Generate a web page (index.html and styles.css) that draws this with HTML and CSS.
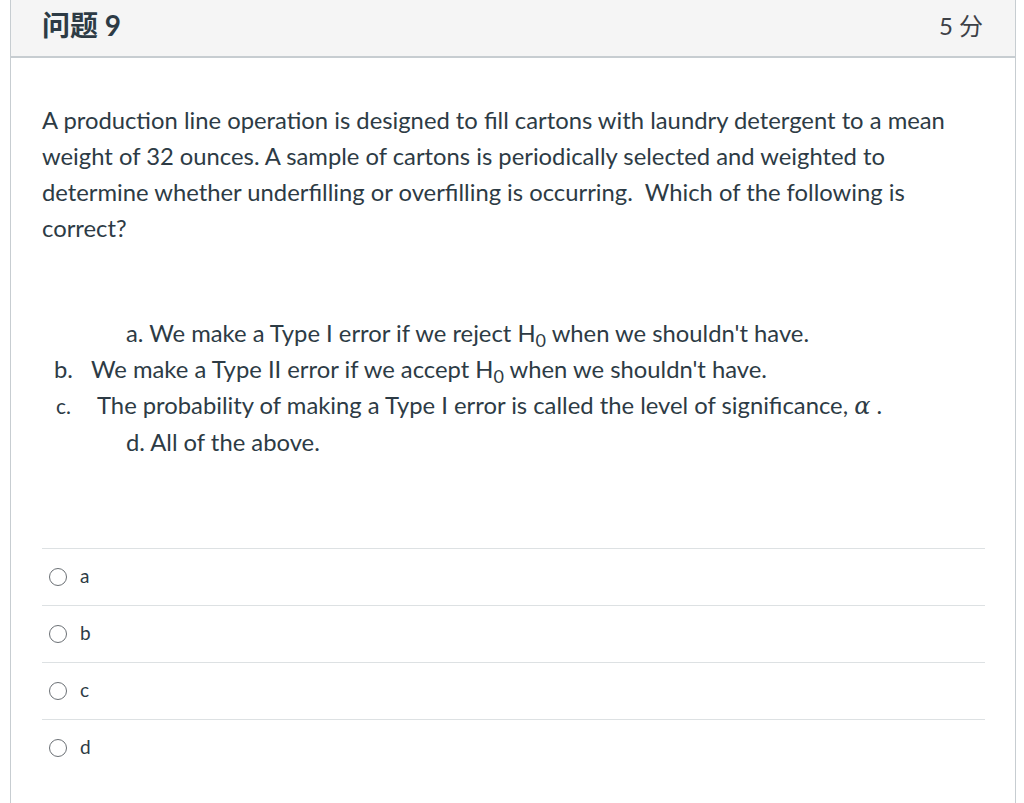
FILE: index.html
```html
<!DOCTYPE html>
<html>
<head>
<meta charset="utf-8">
<link rel="stylesheet" href="styles.css">
</head>
<body>
<div class="quiz">
  <div class="q-header">
    <span class="q-title">问题 9</span>
    <span class="q-points">5 分</span>
  </div>
  <div class="q-body">
    <p class="q-text">A production line operation is designed to fill cartons with laundry detergent to a mean weight of 32 ounces. A sample of cartons is periodically selected and weighted to determine whether underfilling or overfilling is occurring.&nbsp; Which of the following is correct?</p>
    <div class="choices">
      <div class="choice indent">a. We make a Type I error if we reject H<sub>0</sub> when we shouldn't have.</div>
      <div class="choice b-line"><span class="lbl-b">b.</span>We make a Type II error if we accept H<sub>0</sub> when we shouldn't have.</div>
      <div class="choice c-line"><span class="lbl-c">c.</span>The probability of making a Type I error is called the level of significance, <span class="alpha">α</span> .</div>
      <div class="choice indent">d. All of the above.</div>
    </div>
    <div class="answers">
      <label class="answer"><span class="radio"></span><span class="ans-text">a</span></label>
      <label class="answer"><span class="radio"></span><span class="ans-text">b</span></label>
      <label class="answer"><span class="radio"></span><span class="ans-text">c</span></label>
      <label class="answer"><span class="radio"></span><span class="ans-text">d</span></label>
    </div>
  </div>
</div>
</body>
</html>
```

FILE: styles.css
```css
html, body {
  margin: 0;
  padding: 0;
  background: #ffffff;
}
body {
  font-family: Lato, "Noto Sans CJK SC", sans-serif;
  color: #2d3b45;
}
.quiz {
  margin-left: 10px;
  width: 1004px;
  min-height: 803px;
  border-left: 1px solid #c7cdd1;
  border-right: 1px solid #c7cdd1;
}
.q-header {
  height: 56px;
  background: #f5f5f5;
  border-bottom: 2px solid #c7cdd1;
  display: flex;
  align-items: center;
  justify-content: space-between;
  padding: 0 32px 0 31px;
  box-sizing: content-box;
}
.q-title {
  font-size: 28px;
  font-weight: 700;
  margin-top: -8px;
}
.q-points {
  font-size: 24px;
  color: #3d4147;
  margin-top: -8px;
}
.q-body {
  padding: 0 30px 0 31px;
}
.q-text {
  margin: 44px 0 0 0;
  font-size: 23.8px;
  line-height: 36px;
  width: 935px;
}
.choices {
  margin-top: 69px;
  font-size: 23.8px;
  line-height: 36px;
}
.choice sub {
  font-size: 18px;
  vertical-align: -5px;
  line-height: 0;
}
.indent {
  padding-left: 84px;
}
.b-line {
  padding-left: 12px;
}
.lbl-b {
  display: inline-block;
  width: 37px;
}
.c-line {
  padding-left: 14px;
}
.lbl-c {
  display: inline-block;
  width: 41px;
  font-size: 21px;
}
.alpha {
  font-family: "DejaVu Serif", serif;
  font-style: italic;
  font-size: 24px;
}
.answers {
  margin-top: 88px;
}
.answer {
  display: flex;
  align-items: center;
  height: 56px;
  border-top: 1px solid #dde1e3;
  font-size: 19px;
}
.radio {
  width: 16px;
  height: 16px;
  border: 1.5px solid #6b7075;
  border-radius: 50%;
  margin-left: 7px;
  margin-right: 13px;
  box-sizing: content-box;
}
.ans-text {
  margin-top: -3px;
}
```
